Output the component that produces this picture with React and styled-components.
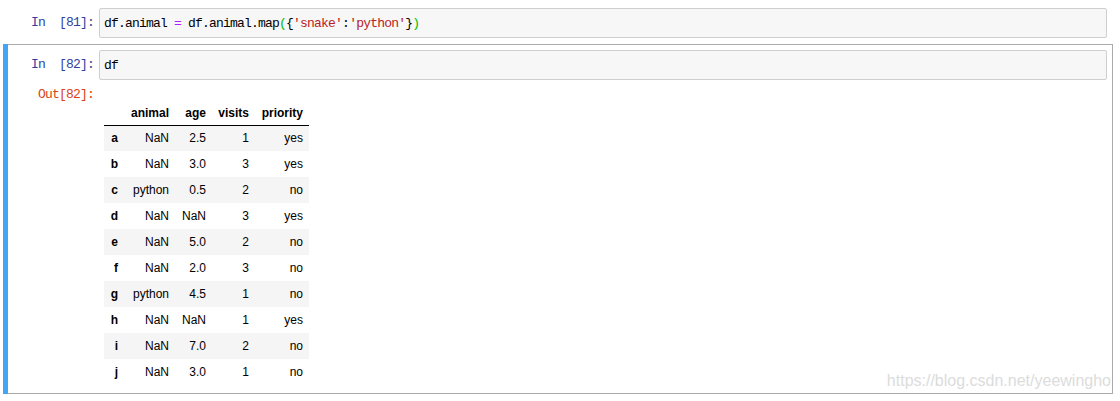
import React from 'react';
import styled, { createGlobalStyle } from 'styled-components';

const GlobalStyle = createGlobalStyle`
  body {
    margin: 0;
    background: #fff;
  }
`;

const mono = `"Liberation Mono", "DejaVu Sans Mono", monospace`;

const Notebook = styled.div`
  position: relative;
  width: 1120px;
  height: 401px;
  box-sizing: border-box;
  padding: 2px 0 0 3px;
  overflow: hidden;
`;

const Cell = styled.div`
  position: relative;
  width: 1110px;
  box-sizing: border-box;
  padding: 5px;
  border: 1px solid ${(p) => (p.selected ? '#ababab' : 'transparent')};
  &::before {
    content: '';
    display: ${(p) => (p.selected ? 'block' : 'none')};
    position: absolute;
    left: -1px;
    top: -1px;
    bottom: -1px;
    width: 5px;
    background: #42a5f5;
  }
`;

const Row = styled.div`
  display: flex;
  align-items: flex-start;
`;

const Prompt = styled.div`
  flex: 0 0 90px;
  box-sizing: border-box;
  padding: ${(p) => (p.out ? '6px 5px 0 0' : '0 5px 0 0')};
  text-align: right;
  white-space: pre;
  font-family: ${mono};
  font-size: 13px;
  letter-spacing: -0.8px;
  line-height: ${(p) => (p.out ? '17px' : '30px')};
  color: ${(p) => (p.out ? '#d84315' : '#303f9f')};
`;

const InputBox = styled.div`
  flex: 1;
  height: 30px;
  box-sizing: border-box;
  display: flex;
  align-items: center;
  padding: 0 4px;
  border: 1px solid #cfcfcf;
  border-radius: 2px;
  background: #f7f7f7;
  font-family: ${mono};
  font-size: 13px;
  letter-spacing: -0.8px;
  white-space: pre;
  color: #000;
`;

const tokenColors = {
  op: '#aa22ff',
  str: '#ba2121',
  bracket: '#00bb00',
};

const Tok = styled.span`
  color: ${(p) => tokenColors[p.t] || '#000'};
`;

const Output = styled.div`
  padding: 21px 0 3px 5px;
`;

const Frame = styled.table`
  border-collapse: collapse;
  border-spacing: 0;
  table-layout: fixed;
  width: 205px;
  font-family: "Liberation Sans", Arial, sans-serif;
  font-size: 12px;
  color: #000;
`;

const Col = styled.col`
  width: ${(p) => p.w}px;
`;

const HeadRow = styled.tr`
  height: 24px;
  border-bottom: 1px solid #000;
`;

const BodyRow = styled.tr`
  height: 26px;
  background: ${(p) => (p.striped ? '#f5f5f5' : 'transparent')};
`;

const Th = styled.th`
  padding: 0 6px;
  text-align: right;
  vertical-align: middle;
  font-weight: bold;
  white-space: nowrap;
`;

const Td = styled.td`
  padding: 0 6px;
  text-align: right;
  vertical-align: middle;
  white-space: nowrap;
`;

const Watermark = styled.div`
  position: absolute;
  right: 9px;
  bottom: 11px;
  font-family: "Liberation Sans", Arial, sans-serif;
  font-size: 16px;
  line-height: 18px;
  color: #dcdcdc;
  pointer-events: none;
`;

const columns = ['animal', 'age', 'visits', 'priority'];
const widths = [20, 51, 37, 43, 54];

const rows = [
  ['a', 'NaN', '2.5', 1, 'yes'],
  ['b', 'NaN', '3.0', 3, 'yes'],
  ['c', 'python', '0.5', 2, 'no'],
  ['d', 'NaN', 'NaN', 3, 'yes'],
  ['e', 'NaN', '5.0', 2, 'no'],
  ['f', 'NaN', '2.0', 3, 'no'],
  ['g', 'python', '4.5', 1, 'no'],
  ['h', 'NaN', 'NaN', 1, 'yes'],
  ['i', 'NaN', '7.0', 2, 'no'],
  ['j', 'NaN', '3.0', 1, 'no'],
];

const App = () => {
  return (
    <>
      <GlobalStyle />
      <Notebook>
        <Cell>
          <Row>
            <Prompt>{'In\u00a0\u00a0[81]:'}</Prompt>
            <InputBox>
              <Tok>df.animal </Tok>
              <Tok t="op">=</Tok>
              <Tok> df.animal.map</Tok>
              <Tok t="bracket">(</Tok>
              <Tok>{'{'}</Tok>
              <Tok t="str">'snake'</Tok>
              <Tok>:</Tok>
              <Tok t="str">'python'</Tok>
              <Tok>{'}'}</Tok>
              <Tok t="bracket">)</Tok>
            </InputBox>
          </Row>
        </Cell>

        <Cell selected>
          <Row>
            <Prompt>{'In\u00a0\u00a0[82]:'}</Prompt>
            <InputBox>
              <Tok>df</Tok>
            </InputBox>
          </Row>
          <Row>
            <Prompt out>Out[82]:</Prompt>
            <Output>
              <Frame>
                <colgroup>
                  {widths.map((w, i) => (
                    <Col key={i} w={w} />
                  ))}
                </colgroup>
                <thead>
                  <HeadRow>
                    <Th />
                    {columns.map((c) => (
                      <Th key={c}>{c}</Th>
                    ))}
                  </HeadRow>
                </thead>
                <tbody>
                  {rows.map(([idx, ...vals], i) => (
                    <BodyRow key={idx} striped={i % 2 === 0}>
                      <Th>{idx}</Th>
                      {vals.map((v, j) => (
                        <Td key={j}>{v}</Td>
                      ))}
                    </BodyRow>
                  ))}
                </tbody>
              </Frame>
            </Output>
          </Row>
        </Cell>

        <Watermark>https://blog.csdn.net/yeewingho</Watermark>
      </Notebook>
    </>
  );
};

export default App;
